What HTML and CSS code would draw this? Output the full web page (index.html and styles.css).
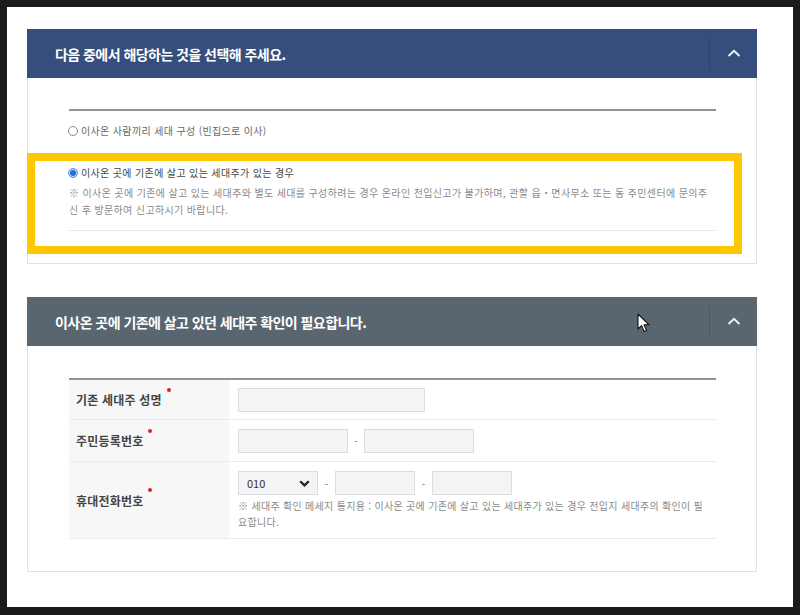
FILE: index.html
```html
<!DOCTYPE html>
<html lang="ko">
<head>
<meta charset="utf-8">
<title>전입신고</title>
<link rel="stylesheet" href="styles.css">
</head>
<body>
<div class="screen">
  <section class="panel">
    <header class="panel-head navy">
      <h2 class="panel-title">다음 중에서 해당하는 것을 선택해 주세요.</h2>
      <div class="toggle">
        <svg class="chev" width="14" height="8" viewBox="0 0 14 8"><polyline points="1.5,7 7,1.8 12.5,7" fill="none" stroke="#eef1f6" stroke-width="2"/></svg>
      </div>
    </header>
    <div class="panel-body">
      <div class="options">
        <label class="opt">
          <input type="radio" name="kind" class="radio">
          <span class="opt-text">이사온 사람끼리 세대 구성 (빈집으로 이사)</span>
        </label>
        <div class="opt-block">
          <label class="opt sel">
            <input type="radio" name="kind" class="radio" checked>
            <span class="opt-text">이사온 곳에 기존에 살고 있는 세대주가 있는 경우</span>
          </label>
          <p class="note">※ 이사온 곳에 기존에 살고 있는 세대주와 별도 세대를 구성하려는 경우 온라인 전입신고가 불가하며, 관할 읍・면사무소 또는 동 주민센터에 문의주<br>신 후 방문하여 신고하시기 바랍니다.</p>
        </div>
      </div>
    </div>
    <div class="highlight"></div>
  </section>

  <section class="panel second">
    <header class="panel-head slate">
      <h2 class="panel-title">이사온 곳에 기존에 살고 있던 세대주 확인이 필요합니다.</h2>
      <div class="toggle">
        <svg class="chev" width="14" height="8" viewBox="0 0 14 8"><polyline points="1.5,7 7,1.8 12.5,7" fill="none" stroke="#eef1f3" stroke-width="2"/></svg>
      </div>
    </header>
    <svg class="cursor" width="13" height="20" viewBox="0 0 13 20"><path d="M1 1 L1 16 L4.6 12.6 L7.2 18.6 L9.6 17.6 L7 11.8 L12 11.8 Z" fill="#fff" stroke="#111" stroke-width="1.1" stroke-linejoin="round"/></svg>
    <div class="panel-body form-body">
      <div class="form">
        <div class="row r1">
          <div class="lbl">기존 세대주 성명<span class="req"></span></div>
          <div class="val">
            <input type="text" class="field w187">
          </div>
        </div>
        <div class="row r2">
          <div class="lbl">주민등록번호<span class="req"></span></div>
          <div class="val">
            <div class="inline">
              <input type="text" class="field w110">
              <span class="dash">-</span>
              <input type="text" class="field w110">
            </div>
          </div>
        </div>
        <div class="row r3">
          <div class="lbl">휴대전화번호<span class="req"></span></div>
          <div class="val">
            <div class="inline">
              <div class="select"><span>010</span><svg width="11" height="7" viewBox="0 0 11 7"><polyline points="1.2,1.2 5.5,5.4 9.8,1.2" fill="none" stroke="#222" stroke-width="2.2"/></svg></div>
              <span class="dash">-</span>
              <input type="text" class="field w80">
              <span class="dash">-</span>
              <input type="text" class="field w80">
            </div>
            <p class="note small">※ 세대주 확인 메세지 통지용 : 이사온 곳에 기존에 살고 있는 세대주가 있는 경우 전입지 세대주의 확인이 필<br>요합니다.</p>
          </div>
        </div>
      </div>
    </div>
  </section>
</div>
</body>
</html>
```

FILE: styles.css
```css
* { box-sizing: border-box; }
html, body { margin: 0; padding: 0; }
body {
  background: #1b1b1b;
  font-family: "Noto Sans CJK KR", "Noto Sans", sans-serif;
  width: 800px;
  height: 615px;
  overflow: hidden;
}
.screen {
  margin: 7px 0 0 7px;
  width: 786px;
  height: 600px;
  background: #fff;
  padding: 22px 0 0 20px;
}
.panel {
  position: relative;
  width: 730px;
}
.panel.second { margin-top: 33px; }
.panel-head {
  height: 49px;
  display: flex;
  align-items: center;
  justify-content: space-between;
  padding-left: 28px;
}
.navy { background: #354e7b; }
.slate { background: #59666f; }
.panel-title {
  margin: 0;
  color: #fff;
  font-size: 14px;
  font-weight: 700;
  letter-spacing: -0.55px;
  line-height: 20px;
}
.toggle {
  width: 48px;
  height: 33px;
  border-left: 1px solid rgba(0,0,0,0.13);
  display: flex;
  align-items: center;
  justify-content: center;
}
.chev { display: block; margin-top: -2px; }
.panel-body {
  border: 1px solid #e1e1e1;
  border-top: none;
  padding: 31px 40px 32px 41px;
}
.form-body { padding-top: 32px; padding-bottom: 32px; }
.options { border-top: 2px solid #8c949d; }
.opt {
  display: flex;
  align-items: center;
  gap: 3px;
  font-size: 10px;
  line-height: 16px;
  letter-spacing: 0.35px;
  color: #666;
}
.options > .opt { padding: 12px 0 13px; }
.opt-block {
  padding: 13px 0 12px;
  border-bottom: 1px solid #e6e6e6;
}
.opt.sel { color: #444; }
.radio {
  appearance: none;
  -webkit-appearance: none;
  margin: 0 0 0 -1px;
  width: 10px;
  height: 10px;
  border-radius: 50%;
  border: 1px solid #8a8a8a;
  background: #fff;
  flex: none;
}
.radio:checked {
  border-color: #5b95e3;
  background: radial-gradient(circle, #1d6fdc 0 3.3px, #2c7be0 3.6px);
  box-shadow: inset 0 0 0 1px #d6e5f8;
}
.note {
  margin: 3px 0 0;
  font-size: 10px;
  line-height: 17px;
  letter-spacing: 0.36px;
  color: #8a8a8a;
}
.note.small { line-height: 16px; letter-spacing: 0.3px; }
.highlight {
  position: absolute;
  left: 0;
  top: 124px;
  width: 715px;
  height: 101px;
  border: 8px solid #ffc700;
  pointer-events: none;
}
.cursor {
  position: absolute;
  left: 610px;
  top: 16px;
}
.form { border-top: 2px solid #8c949d; }
.row {
  display: flex;
  border-bottom: 1px solid #ebebeb;
}
.r1 { height: 40px; }
.r2 { height: 42px; }
.r3 { height: 77px; }
.lbl {
  width: 160px;
  flex: none;
  background: #f7f7f7;
  padding-left: 7px;
  display: flex;
  align-items: center;
  font-size: 12px;
  font-weight: 700;
  letter-spacing: 0.2px;
  color: #444;
}
.req {
  display: inline-block;
  width: 4px;
  height: 4px;
  border-radius: 50%;
  background: #e0221b;
  margin: 0 0 20px 5px;
}
.val {
  flex: 1;
  padding-left: 9px;
  display: flex;
  flex-direction: column;
  justify-content: center;
}
.r3 .val { justify-content: flex-start; padding-top: 9px; }
.inline {
  display: flex;
  align-items: center;
  gap: 6px;
}
.field {
  height: 24px;
  margin: 0;
  background: #f4f4f4;
  border: 1px solid #dcdcdc;
  border-radius: 0;
  padding: 0;
}
.w187 { width: 187px; }
.w110 { width: 110px; }
.w80 { width: 80px; }
.dash {
  width: 4px;
  font-size: 10px;
  color: #777;
  text-align: center;
}
.r3 .dash { width: 5px; }
.select {
  width: 80px;
  height: 24px;
  background: #f4f4f4;
  border: 1px solid #dcdcdc;
  display: flex;
  align-items: center;
  justify-content: space-between;
  padding: 0 7px 0 8px;
  font-size: 11px;
  color: #333;
}
.select svg { display: block; }
```
